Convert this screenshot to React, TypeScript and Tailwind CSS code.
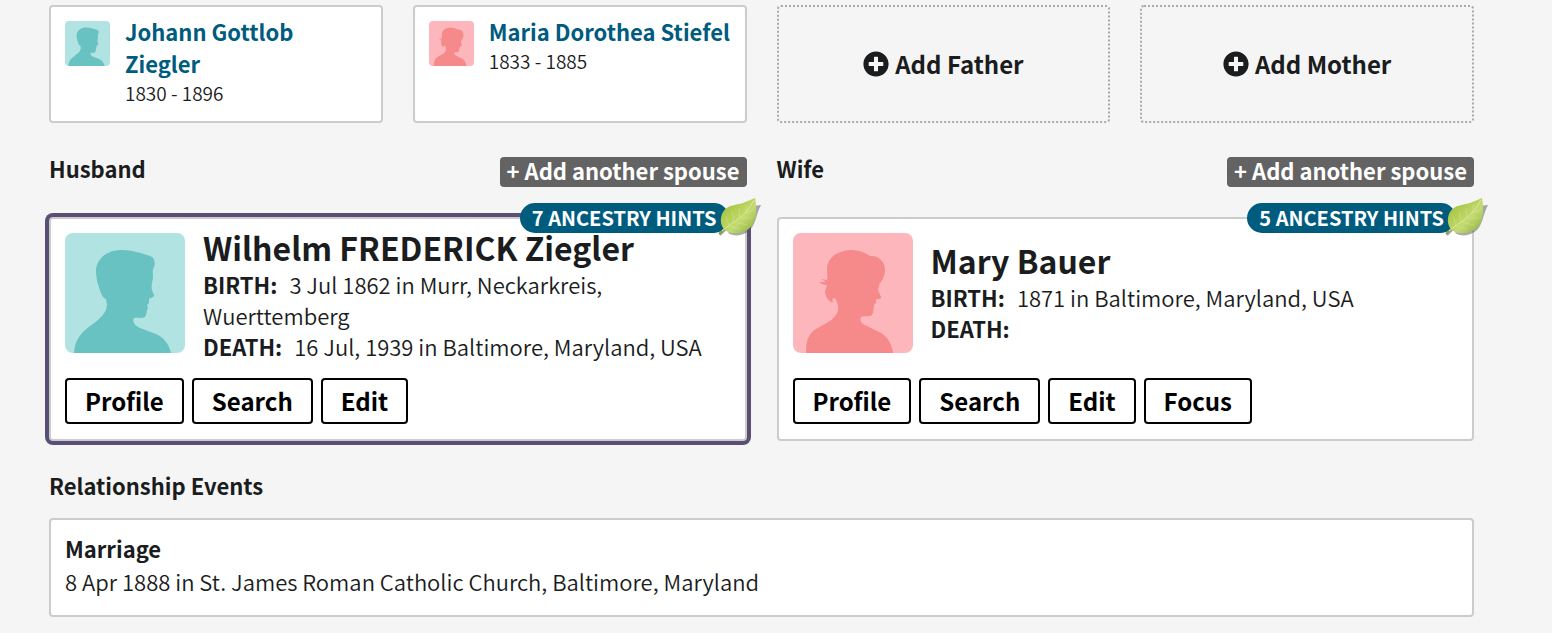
import React from 'react';
import { FaPlusCircle } from 'react-icons/fa';

type Gender = 'male' | 'female';

interface Spouse {
  role: string;
  name: string;
  gender: Gender;
  birth: string;
  death: string;
  hints: number;
  actions: string[];
  selected?: boolean;
}

const SPOUSES: Spouse[] = [
  {
    role: 'Husband',
    name: 'Wilhelm FREDERICK Ziegler',
    gender: 'male',
    birth: '3 Jul 1862 in Murr, Neckarkreis, Wuerttemberg',
    death: '16 Jul, 1939 in Baltimore, Maryland, USA',
    hints: 7,
    actions: ['Profile', 'Search', 'Edit'],
    selected: true,
  },
  {
    role: 'Wife',
    name: 'Mary Bauer',
    gender: 'female',
    birth: '1871 in Baltimore, Maryland, USA',
    death: '',
    hints: 5,
    actions: ['Profile', 'Search', 'Edit', 'Focus'],
  },
];

const Avatar: React.FC<{ gender: Gender; className: string }> = ({ gender, className }) => (
  <svg viewBox="0 0 120 120" aria-hidden="true" className={`shrink-0 ${className}`}>
    {gender === 'male' ? (
      <>
        <rect width="120" height="120" fill="#b0e3e1" />
        <path
          fill="#69c2c2"
          d="M9 120C10 106 16 100 25 93C35 86 42 80 42 71L41 66C37 65 35 58 33 51C31 44 31 38 31 36C33 24 43 17 57 17C67 17 76 20 85 23C89 24 91 30 89 34C87 37 88 41 88 45C87 50 86 54 87 57L89 62C89 65 86 64 84 66L84 70L82 72L83 75C81 78 82 81 80 84C76 86 72 84 69 85C67 89 70 93 75 95L91 101C100 105 104 112 106 120Z"
        />
      </>
    ) : (
      <>
        <rect width="120" height="120" fill="#fdb6bc" />
        <path
          fill="#f68989"
          d="M13 120C13 108 15 101 23 96L37 88C43 84 46 78 45 74C45 70 43 67 42 65C39 65 39 67 40 70C35 68 32 63 32 58L34 52C31 52 28 51 26 49L33 49L28 46L34 47C35 43 34 40 34 37C34 25 43 18 57 17C65 17 71 19 77 23C85 22 92 28 92 37C92 42 90 46 88 49C86 50 86 54 85 57L88 64C88 67 85 65 83 67L83 70L81 72L80 80C78 85 73 82 68 84C66 88 69 91 74 93L88 100C95 104 99 112 100 120Z"
        />
      </>
    )}
  </svg>
);

const Leaf: React.FC = () => (
  <svg viewBox="0 0 46 40" aria-hidden="true" className="absolute -right-[33px] -top-1.5 h-10 w-[46px]">
    <defs>
      <linearGradient id="leaf" x1="0" y1="0" x2="1" y2="1">
        <stop offset="0" stopColor="#94bb40" />
        <stop offset="0.3" stopColor="#aecb4d" />
        <stop offset="0.6" stopColor="#c3da72" />
        <stop offset="1" stopColor="#86ad35" />
      </linearGradient>
    </defs>
    <path d="M12 36C18 40 28 39 34 33C40 27 40 17 45 8L36 9Z" fill="#555" opacity="0.5" />
    <path d="M4 38L10 32" stroke="#666" strokeWidth="2" opacity="0.6" />
    <path d="M3 37L9 31" stroke="#8a9e48" strokeWidth="2" />
    <path
      d="M8 32C4 28 4 20 7 15C11 8 20 8 27 6C32 4 36 2 39 1C40 7 41 15 39 22C37 29 32 34 26 35C20 37 12 37 8 32Z"
      fill="url(#leaf)"
    />
    <path d="M6 34C15 26 29 21 38 3" fill="none" stroke="#dcea9a" strokeWidth="1" />
    <path
      d="M13 29L10 19M18 25L16 14M24 21L23 11M30 16L30 8M13 29L24 32M18 25L31 28M24 21L36 21M30 16L38 13"
      fill="none"
      stroke="#dcea9a"
      strokeWidth="0.6"
      opacity="0.6"
    />
  </svg>
);

const ParentCard: React.FC<{ name: string; years: string; gender: Gender }> = ({ name, years, gender }) => (
  <div className="flex min-h-[118px] gap-[15px] rounded border-2 border-[#ccc] bg-white pl-3.5 pr-2 pt-2">
    <Avatar gender={gender} className="mt-1.5 size-[45px] rounded" />
    <div className="max-w-[246px] grow">
      <a href="#" className="block text-[22px] font-bold leading-8 text-[#005c7f]">
        {name}
      </a>
      <p className="text-[19px] font-[350] leading-7">{years}</p>
    </div>
  </div>
);

const AddParent: React.FC<{ label: string }> = ({ label }) => (
  <button className="flex min-h-[118px] items-center justify-center gap-1.5 rounded border-2 border-dotted border-[#aaa] text-2xl font-bold">
    <FaPlusCircle className="size-[26px]" />
    {label}
  </button>
);

const SpouseSection: React.FC<{ spouse: Spouse }> = ({ spouse }) => (
  <section className="flex flex-col">
    <div className="flex items-start justify-between">
      <h2 className="text-[22px] font-bold leading-[22px]">{spouse.role}</h2>
      <button className="rounded bg-[#636363] px-[7px] pb-1 text-[22px] font-bold leading-[26px] text-white">
        + Add another spouse
      </button>
    </div>
    <div
      className={`relative mt-[30px] flex grow flex-col rounded border-2 border-[#ccc] bg-white px-3.5 pb-[15px] pt-3.5 ${
        spouse.selected ? 'ring-4 ring-[#5b4e75]' : ''
      }`}
    >
      <a
        href="#"
        className="absolute -top-4 right-4 rounded-full bg-[#005c7f] px-3 text-xl font-bold leading-[30px] text-white"
      >
        {spouse.hints} ANCESTRY HINTS
        <Leaf />
      </a>
      <div className="flex min-h-[124px] items-center gap-[18px]">
        <Avatar gender={spouse.gender} className="size-[120px] self-start rounded-lg" />
        <div className="text-[22px] font-[350] leading-[31px]">
          <h3 className="mb-2 text-[32px] font-bold leading-7">{spouse.name}</h3>
          <p>
            <strong className="mr-3 font-bold">BIRTH:</strong>
            {spouse.birth}
          </p>
          <p>
            <strong className="mr-3 font-bold">DEATH:</strong>
            {spouse.death}
          </p>
        </div>
      </div>
      <div className="mt-auto flex gap-2">
        {spouse.actions.map((action) => (
          <button
            key={action}
            className="rounded border-2 border-black bg-white px-[18px] text-2xl font-bold leading-[42px] text-black"
          >
            {action}
          </button>
        ))}
      </div>
    </div>
  </section>
);

const App: React.FC = () => (
  <main className="min-h-screen bg-[#f5f5f5] pb-4 pl-[49px] pr-[78px] pt-[5px] font-['Noto_Sans_CJK_SC','Noto_Sans',sans-serif] text-[#1a1c1d]">
    <div className="grid grid-cols-4 gap-[30px]">
      <ParentCard name="Johann Gottlob Ziegler" years="1830 - 1896" gender="male" />
      <ParentCard name="Maria Dorothea Stiefel" years="1833 - 1885" gender="female" />
      <AddParent label="Add Father" />
      <AddParent label="Add Mother" />
    </div>

    <div className="mt-[34px] grid min-h-[284px] grid-cols-2 gap-[30px]">
      {SPOUSES.map((spouse) => (
        <SpouseSection key={spouse.role} spouse={spouse} />
      ))}
    </div>

    <section className="mt-8">
      <h2 className="text-[22px] font-bold leading-6">Relationship Events</h2>
      <div className="mt-[21px] rounded border-2 border-[#ccc] bg-white px-3.5 pb-[17px] pt-3 text-[22px] leading-[33px]">
        <h3 className="font-bold">Marriage</h3>
        <p className="font-[350]">8 Apr 1888 in St. James Roman Catholic Church, Baltimore, Maryland</p>
      </div>
    </section>
  </main>
);

export default App;
